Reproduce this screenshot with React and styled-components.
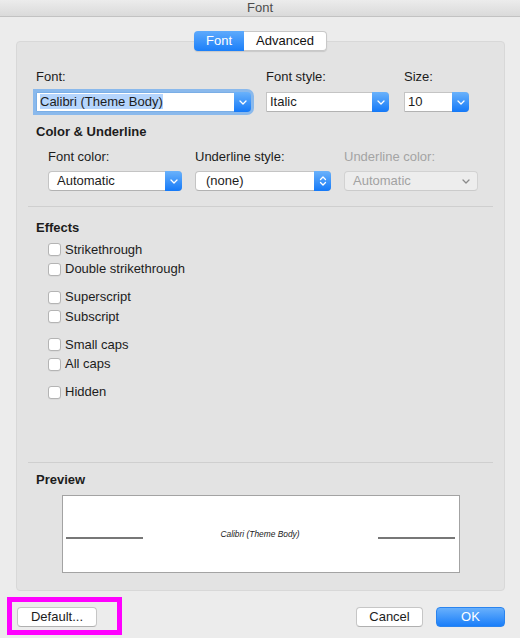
import React from 'react';
import styled, { createGlobalStyle, css } from 'styled-components';

const GlobalStyle = createGlobalStyle`
  html, body { margin: 0; padding: 0; }
  body {
    width: 520px; height: 638px; overflow: hidden; background: #ececec;
    font-family: "Liberation Sans", Arial, Helvetica, sans-serif;
  }
  *, *::before, *::after { box-sizing: border-box; }
`;

const Window = styled.div`
  width: 520px; height: 638px; background: #ececec;
  display: flex; flex-direction: column;
  color: #1c1c1c; font-size: 13px; line-height: 16px;
`;

const TitleBar = styled.div`
  height: 17px; border-bottom: 1px solid #c2c2c2;
  background: linear-gradient(#ececec, #dadada);
  text-align: center; color: #4d4d4d; font-size: 13px; line-height: 16px;
`;

const TabRow = styled.div`
  display: flex; justify-content: center; padding-left: 1px;
  margin-top: 14px; margin-bottom: -10px;
  position: relative; z-index: 1;
`;

const Segmented = styled.div`
  display: flex; height: 20px; border-radius: 4px;
  box-shadow: 0 1px 1px rgba(0, 0, 0, 0.12);
`;

const Segment = styled.div`
  width: ${p => p.$w}px; height: 20px;
  display: flex; align-items: center; justify-content: center;
  font-size: 13px;
  ${p => p.$active
    ? css`
      background: linear-gradient(#5eaafc, #1b7ff9);
      color: #fff; border-radius: 4px 0 0 4px;
    `
    : css`
      background: #fff; color: #111;
      border: 1px solid #c8c8c8; border-left: none;
      border-radius: 0 4px 4px 0;
    `}
`;

const Panel = styled.div`
  margin-left: 16px; width: 489px; height: 550px;
  background: #e3e3e3; border: 1px solid #d8d8d8; border-radius: 4px;
  padding: 27px 11px 17px;
  display: flex; flex-direction: column;
`;

const Section = styled.div`
  padding-left: 8px;
  display: flex; flex-direction: column;
`;

const Heading = styled.div`
  font-weight: bold; font-size: 13px; line-height: 16px;
  margin-top: ${p => p.$mt || 0}px;
`;

const FieldRow = styled.div`
  display: flex; gap: ${p => p.$gap}px;
  margin-top: ${p => p.$mt || 0}px;
  margin-left: ${p => p.$ml || 0}px;
`;

const Field = styled.div`
  display: flex; flex-direction: column; gap: ${p => p.$gap || 7}px;
`;

const Label = styled.div`
  color: ${p => (p.$disabled ? '#a4a4a4' : '#1c1c1c')};
  line-height: 16px; white-space: nowrap;
`;

const SelectBox = styled.div`
  width: ${p => p.$w}px; height: 20px; display: flex; align-items: stretch;
  background: ${p => (p.$disabled ? '#ededed' : '#fff')};
  border: 1px solid ${p => (p.$disabled ? '#d2d2d2' : '#c4c4c4')};
  border-bottom-color: ${p => (p.$disabled ? '#cbcbcb' : '#b2b2b2')};
  border-radius: ${p => (p.$combo ? '0 4px 4px 0' : '4px')};
  ${p => p.$focus && css`
    box-shadow: 0 0 0 3px #8ab9ec;
    border-color: #7aaee6;
  `}
`;

const SelectText = styled.div`
  flex: 1; min-width: 0; overflow: hidden; white-space: nowrap;
  padding-left: ${p => p.$pad}px;
  line-height: 18px;
  color: ${p => (p.$disabled ? '#a2a2a2' : '#1c1c1c')};
`;

const Highlight = styled.span`
  background: #b5d5fd;
`;

const ArrowButton = styled.div`
  width: 17px; margin: -1px -1px -1px 0;
  display: flex; align-items: center; justify-content: center;
  border-radius: 0 4px 4px 0;
  ${p => p.$plain
    ? css`background: transparent; margin-right: 3px;`
    : css`background: linear-gradient(#6ab2fb, #1479f8);`}
`;

const Divider = styled.div`
  height: 1px; background: #cfcfcf;
  margin-top: ${p => p.$mt || 0}px;
`;

const CheckList = styled.div`
  display: flex; flex-direction: column; gap: 8.5px;
  margin: 4.5px 0 0 12px;
`;

const CheckGroup = styled.div`
  display: flex; flex-direction: column;
`;

const CheckRow = styled.label`
  display: flex; align-items: center; gap: 4px; height: 19.5px;
`;

const Box = styled.span`
  width: 13px; height: 13px; flex-shrink: 0;
  background: #fff; border: 1px solid #b4b4b4; border-radius: 3px;
  box-shadow: 0 0.5px 0.5px rgba(0, 0, 0, 0.08);
`;

const PreviewSection = styled.div`
  margin-top: auto; display: flex; flex-direction: column;
`;

const PreviewBox = styled.div`
  width: 398px; height: 78px; margin: 7px auto 0;
  background: #fff; border: 1px solid #a3a3a3;
  display: flex; align-items: flex-start;
  padding: 33px 4px 0 3px;
`;

const PreviewLine = styled.div`
  width: 77px; height: 2px; margin-top: 8px; background: #777;
`;

const PreviewText = styled.div`
  flex: 1; text-align: center;
  font-style: italic; font-size: 8.4px; line-height: 10px; color: #222;
`;

const Footer = styled.div`
  display: flex; align-items: flex-start;
  padding: 6px 15px 0 7px;
`;

const Annotation = styled.div`
  border: 5px solid #ff00ff;
  padding: 5px 20px 3px 5px;
`;

const Button = styled.button`
  width: ${p => p.$w}px; height: 20px; padding: 0;
  margin-top: ${p => p.$mt || 0}px;
  margin-left: ${p => p.$ml || '0'};
  font-family: "Liberation Sans", Arial, sans-serif; font-size: 13px; line-height: 16px;
  border-radius: 4px;
  ${p => p.$primary
    ? css`
      background: linear-gradient(#68b0fc, #1a7ef9);
      color: #fff; border: 1px solid #2a84ef;
    `
    : css`
      background: #fff; color: #1c1c1c;
      border: 1px solid #c6c6c6; border-bottom-color: #b0b0b0;
    `}
`;

const Chevron = ({ color = '#fff' }) => (
  <svg width="8" height="5" viewBox="0 0 8 5">
    <path d="M1 1l3 3 3-3" fill="none" stroke={color} strokeWidth="1.3" strokeLinecap="round" strokeLinejoin="round" />
  </svg>
);

const UpDown = () => (
  <svg width="8" height="12" viewBox="0 0 8 12">
    <path d="M1.5 4.5L4 2l2.5 2.5M1.5 7.5L4 10l2.5-2.5" fill="none" stroke="#fff" strokeWidth="1.3" strokeLinecap="round" strokeLinejoin="round" />
  </svg>
);

function Select({ w, value, pad = 8, combo, focus, disabled, updown, highlight }) {
  return (
    <SelectBox $w={w} $combo={combo} $focus={focus} $disabled={disabled}>
      <SelectText $pad={pad} $disabled={disabled}>
        {highlight ? <Highlight>{value}</Highlight> : value}
      </SelectText>
      <ArrowButton $plain={disabled}>
        {disabled ? <Chevron color="#8a8a8a" /> : updown ? <UpDown /> : <Chevron />}
      </ArrowButton>
    </SelectBox>
  );
}

const groups = [
  ['Strikethrough', 'Double strikethrough'],
  ['Superscript', 'Subscript'],
  ['Small caps', 'All caps'],
  ['Hidden'],
];

export default function App() {
  return (
    <>
      <GlobalStyle />
      <Window>
        <TitleBar>Font</TitleBar>
        <TabRow>
          <Segmented>
            <Segment $active $w={50}>Font</Segment>
            <Segment $w={83}>Advanced</Segment>
          </Segmented>
        </TabRow>
        <Panel>
          <Section>
            <FieldRow $gap={15}>
              <Field>
                <Label>Font:</Label>
                <Select w={215} value="Calibri (Theme Body)" pad={3} combo focus highlight />
              </Field>
              <Field>
                <Label>Font style:</Label>
                <Select w={123} value="Italic" pad={3} combo />
              </Field>
              <Field>
                <Label>Size:</Label>
                <Select w={65} value="10" pad={3} combo />
              </Field>
            </FieldRow>
            <Heading $mt={11.5}>Color &amp; Underline</Heading>
            <FieldRow $gap={13} $mt={9} $ml={12}>
              <Field $gap={6.5}>
                <Label>Font color:</Label>
                <Select w={134} value="Automatic" pad={8} />
              </Field>
              <Field $gap={6.5}>
                <Label>Underline style:</Label>
                <Select w={136} value="(none)" pad={10} updown />
              </Field>
              <Field $gap={6.5}>
                <Label $disabled>Underline color:</Label>
                <Select w={134} value="Automatic" pad={8} disabled />
              </Field>
            </FieldRow>
          </Section>
          <Divider $mt={15} />
          <Section>
            <Heading $mt={12.5}>Effects</Heading>
            <CheckList>
              {groups.map((g, i) => (
                <CheckGroup key={i}>
                  {g.map(item => (
                    <CheckRow key={item}>
                      <Box />
                      {item}
                    </CheckRow>
                  ))}
                </CheckGroup>
              ))}
            </CheckList>
          </Section>
          <PreviewSection>
            <Divider />
            <Section>
              <Heading $mt={9}>Preview</Heading>
            </Section>
            <PreviewBox>
              <PreviewLine />
              <PreviewText>Calibri (Theme Body)</PreviewText>
              <PreviewLine />
            </PreviewBox>
          </PreviewSection>
        </Panel>
        <Footer>
          <Annotation>
            <Button $w={80}>Default...</Button>
          </Annotation>
          <Button $w={67} $mt={10} $ml="auto">Cancel</Button>
          <Button $w={69} $mt={10} $ml="13px" $primary>OK</Button>
        </Footer>
      </Window>
    </>
  );
}
